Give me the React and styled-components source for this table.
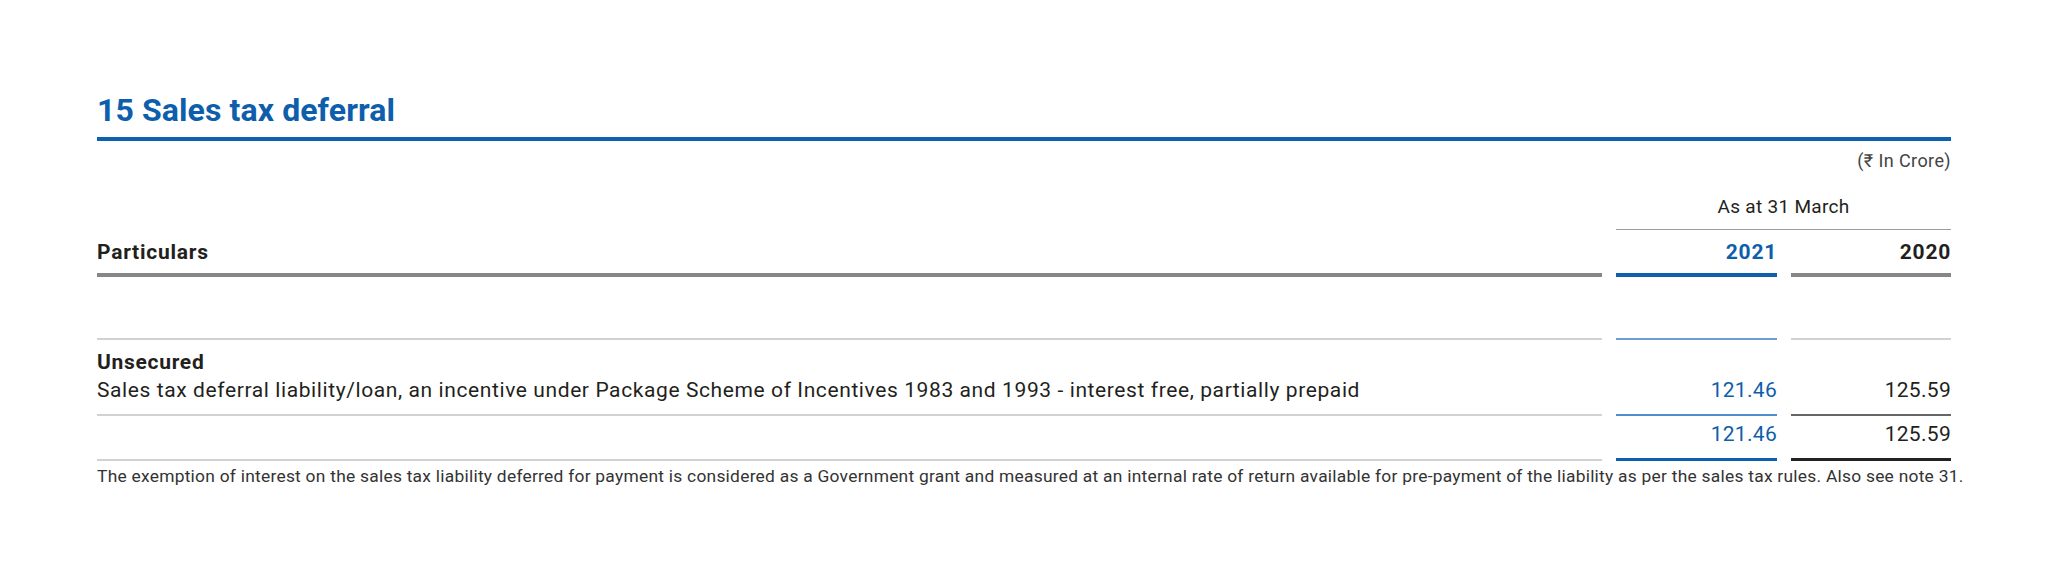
import React from "react";
import styled, { createGlobalStyle, css } from "styled-components";

const GlobalStyle = createGlobalStyle`
  html, body {
    margin: 0;
    padding: 0;
    background: #ffffff;
  }
  body {
    font-family: Roboto, "Noto Sans", "Liberation Sans", sans-serif;
    color: #231f20;
  }
`;

const BLUE = "#0d5eab";

const Page = styled.section`
  width: 2048px;
  box-sizing: border-box;
  padding: 92px 97px 40px 97px;
`;

const Title = styled.h2`
  margin: 0;
  font-size: 32px;
  line-height: 36px;
  font-weight: 700;
  letter-spacing: 0.1px;
  color: ${BLUE};
  padding-bottom: 9px;
  border-bottom: 4px solid #1060b0;
`;

const Unit = styled.div`
  text-align: right;
  font-size: 18px;
  line-height: 20px;
  letter-spacing: 0.4px;
  color: #444444;
  margin-top: 10px;
`;

const Row = styled.div`
  display: grid;
  grid-template-columns: 1fr 161px 160px;
  column-gap: 14px;
`;

const rules = {
  none: css``,
  thin: css`border-bottom: 1px solid #9c9c9c;`,
  heavyGrey: css`border-bottom: 4px solid #878787;`,
  heavyBlue: css`border-bottom: 4px solid #0f5fae;`,
  lightGrey: css`border-bottom: 2px solid #d2d2d2;`,
  lightBlue: css`border-bottom: 2px solid #6b9fd6;`,
  midBlue: css`border-bottom: 2px solid #4f8dcc;`,
  darkGrey: css`border-bottom: 2px solid #666666;`,
  strongBlue: css`border-bottom: 3px solid #0f5fae;`,
  strongDark: css`border-bottom: 3px solid #222222;`,
};

const Cell = styled.div`
  ${({ $rule }) => rules[$rule || "none"]};
  ${({ $span }) => $span && css`grid-column: ${$span};`}
  text-align: ${({ $align }) => $align || "left"};
  color: ${({ $blue }) => ($blue ? BLUE : "#231f20")};
  font-weight: ${({ $bold }) => ($bold ? 700 : 400)};
  display: flex;
  flex-direction: column;
  justify-content: flex-end;
  align-items: ${({ $align }) => ($align === "right" ? "flex-end" : $align === "center" ? "center" : "flex-start")};
`;

const Amount = styled.span`
  letter-spacing: 0.3px;
`;

const PeriodRow = styled(Row)`
  font-size: 19px;
  line-height: 22px;
  letter-spacing: 0.3px;
  ${Cell} {
    padding: 25px 0 11px;
  }
`;

const HeadRow = styled(Row)`
  font-size: 21px;
  line-height: 24px;
  letter-spacing: 0.75px;
  ${Cell} {
    padding: 10px 0 9px;
  }
`;

const SpacerRow = styled(Row)`
  height: 63px;
`;

const BodyRow = styled(Row)`
  font-size: 21px;
  line-height: 28px;
  letter-spacing: 0.6px;
  ${Cell} {
    padding: ${({ $pad }) => $pad || "8px 0 10px"};
  }
`;

const GroupLabel = styled.div`
  font-weight: 700;
  letter-spacing: 0.7px;
`;

const Footnote = styled.p`
  margin: 4px 0 0;
  font-size: 17.4px;
  line-height: 22px;
  letter-spacing: 0.25px;
  white-space: nowrap;
  color: #333333;
`;

const App = () => (
  <>
    <GlobalStyle />
    <Page>
      <Title>15 Sales tax deferral</Title>
      <Unit>(₹ In Crore)</Unit>
      <PeriodRow>
        <Cell />
        <Cell $span="2 / 4" $align="center" $rule="thin">
          As at 31 March
        </Cell>
      </PeriodRow>
      <HeadRow>
        <Cell $bold $rule="heavyGrey">Particulars</Cell>
        <Cell $bold $blue $align="right" $rule="heavyBlue">2021</Cell>
        <Cell $bold $align="right" $rule="heavyGrey">2020</Cell>
      </HeadRow>
      <SpacerRow>
        <Cell $rule="lightGrey" />
        <Cell $rule="lightBlue" />
        <Cell $rule="lightGrey" />
      </SpacerRow>
      <BodyRow>
        <Cell $rule="lightGrey">
          <GroupLabel>Unsecured</GroupLabel>
          <div>
            Sales tax deferral liability/loan, an incentive under Package Scheme of
            Incentives 1983 and 1993 - interest free, partially prepaid
          </div>
        </Cell>
        <Cell $blue $align="right" $rule="midBlue"><Amount>121.46</Amount></Cell>
        <Cell $align="right" $rule="darkGrey"><Amount>125.59</Amount></Cell>
      </BodyRow>
      <BodyRow $pad="4px 0 10px">
        <Cell $rule="lightGrey" />
        <Cell $blue $align="right" $rule="strongBlue"><Amount>121.46</Amount></Cell>
        <Cell $align="right" $rule="strongDark"><Amount>125.59</Amount></Cell>
      </BodyRow>
      <Footnote>
        The exemption of interest on the sales tax liability deferred for payment is
        considered as a Government grant and measured at an internal rate of return
        available for pre-payment of the liability as per the sales tax rules. Also see
        note 31.
      </Footnote>
    </Page>
  </>
);

export default App;
